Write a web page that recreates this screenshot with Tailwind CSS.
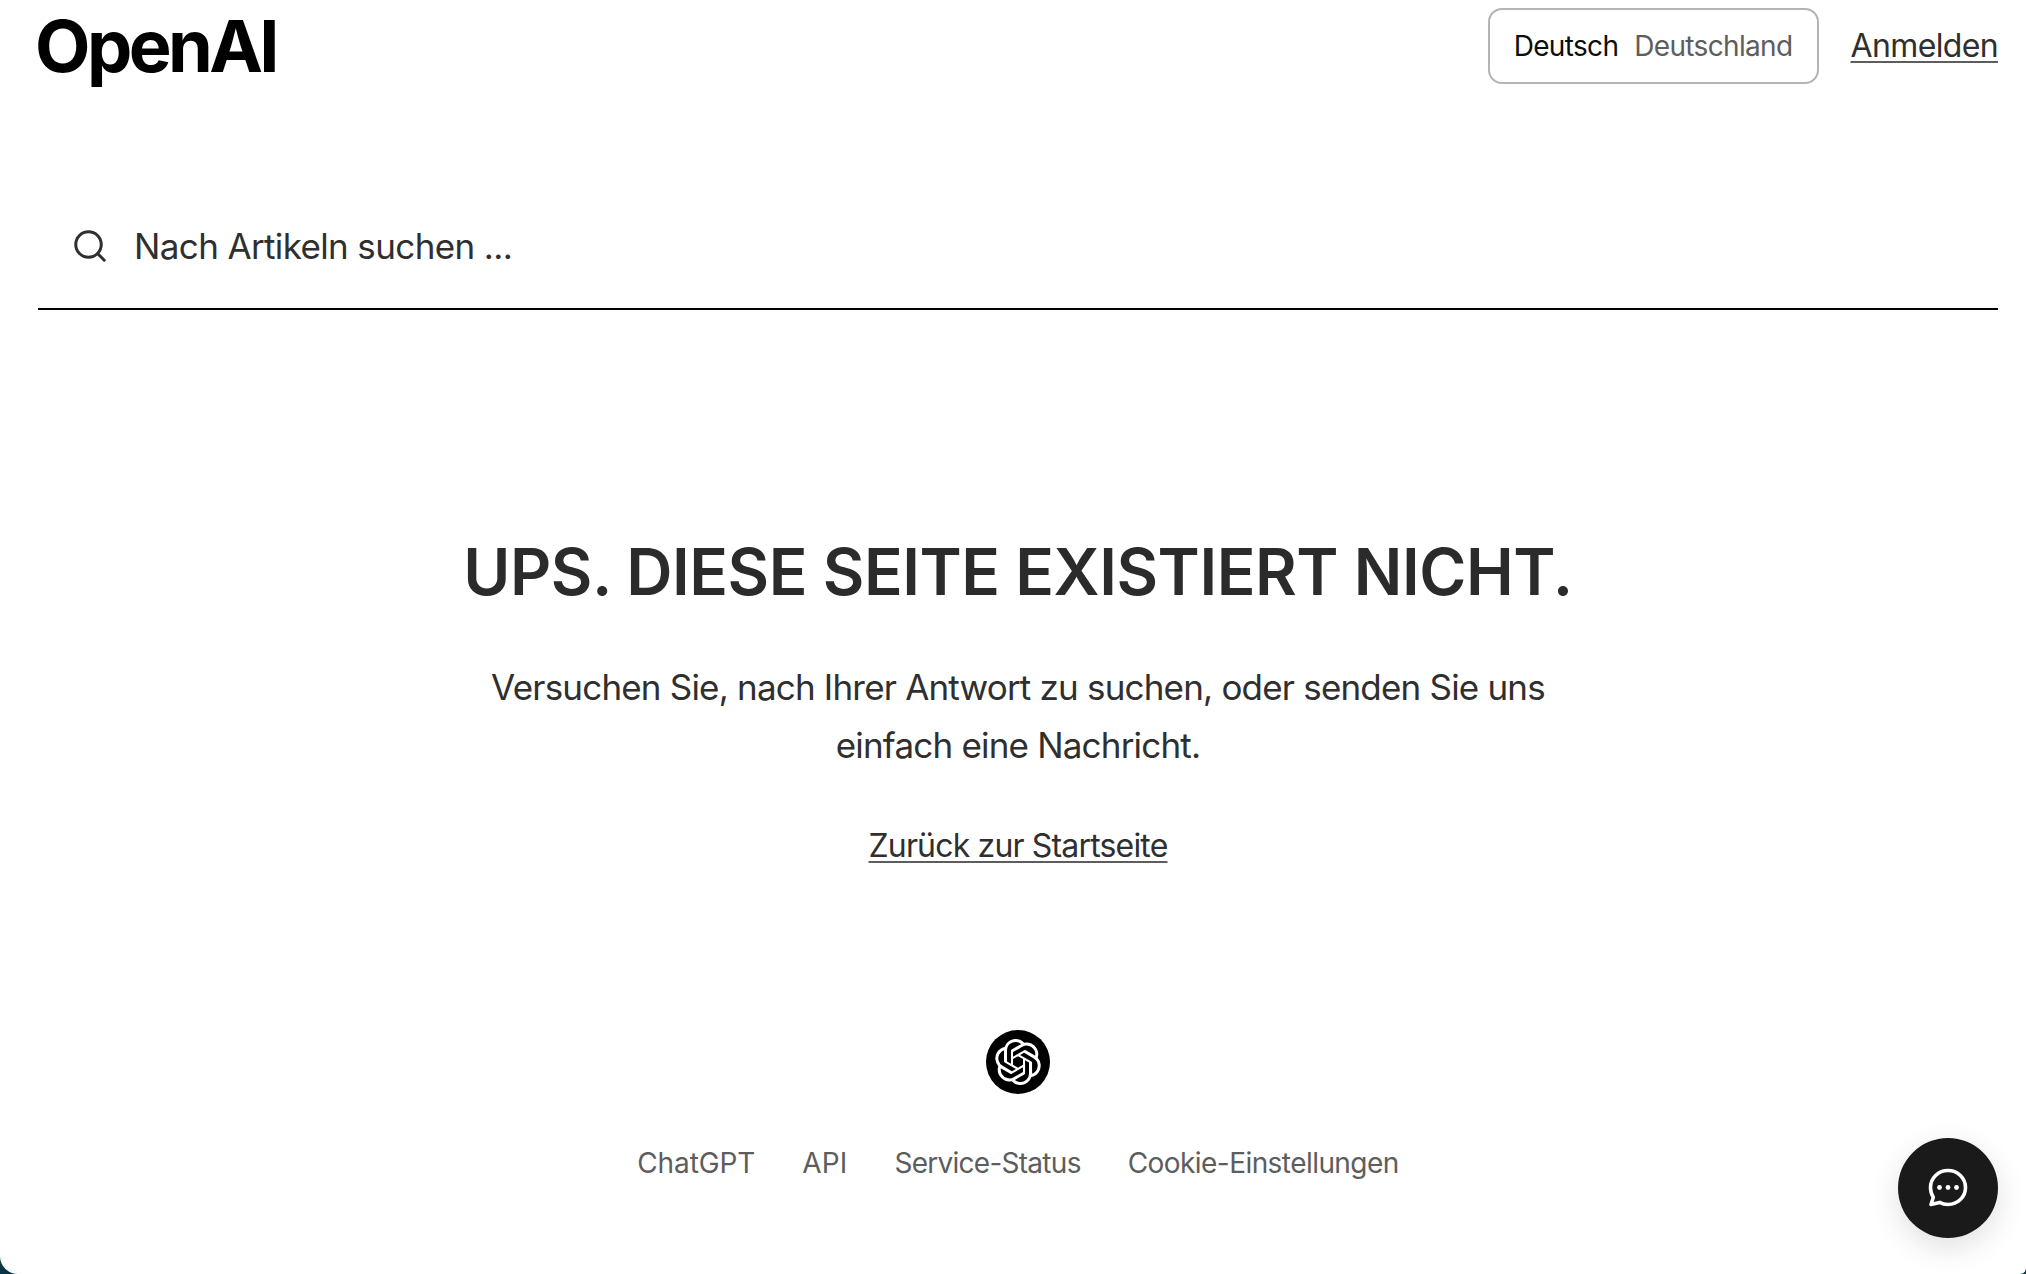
<!DOCTYPE html>
<html lang="de">
<head>
    <meta charset="UTF-8">
    <title>OpenAI Hilfe</title>
    <script src="https://cdn.jsdelivr.net/npm/@tailwindcss/browser@4"></script>
</head>
<body class="bg-[#0b3542] h-[1274px] overflow-hidden font-['Inter',sans-serif]">
    <div class="relative h-[1274px] bg-white rounded-bl-[18px] rounded-br-[6px] overflow-hidden">
        <header class="flex items-center justify-between pl-[38px] pr-[28px] h-[92px]">
            <a href="#" class="text-[72px] font-bold tracking-[-0.05em] leading-none text-black -ml-[3px]">OpenAI</a>
            <div class="flex items-center gap-[32px]">
                <button class="flex items-center justify-center gap-[16px] w-[331px] h-[76px] -mt-[1px] border-2 border-[#b4b4b4] rounded-[14px] text-[28px] tracking-[-0.024em]">
                    <span class="text-[#0d0d0d]">Deutsch</span>
                    <span class="text-[#5d5d5d]">Deutschland</span>
                </button>
                <a href="#" class="text-[32px] tracking-[-0.02em] text-[#2f2f2f] underline underline-offset-[4px] decoration-2 decoration-[#5d5d5d]">Anmelden</a>
            </div>
        </header>

        <div class="ml-[38px] mr-[28px] mt-[116px] h-[102px] border-b-2 border-black flex items-start pl-[34px] gap-[26px]">
            <svg class="w-[36px] h-[36px] mt-[20px] shrink-0" viewBox="0 0 24 24" fill="none" stroke="#2f2f2f" stroke-width="2" stroke-linecap="round">
                <circle cx="11" cy="11" r="8.5"/>
                <path d="M17.2 17.2 21.5 21.5"/>
            </svg>
            <span class="text-[35px] leading-[60px] mt-[8px] tracking-[-0.018em] text-[#2f2f2f]">Nach Artikeln suchen ...</span>
        </div>

        <main class="flex flex-col items-center text-center ml-[38px] mr-[28px] mt-[226px]">
            <h1 class="text-[64px] leading-[72px] font-semibold tracking-[-0.007em] text-[#2b2b2b] uppercase">Ups. Diese Seite existiert nicht.</h1>
            <p class="mt-[50px] text-[35px] leading-[58px] tracking-[-0.023em] text-[#2f2f2f]">Versuchen Sie, nach Ihrer Antwort zu suchen, oder senden Sie uns<br>einfach eine Nachricht.</p>
            <a href="#" class="mt-[52px] text-[32px] leading-[40px] tracking-[-0.026em] text-[#2f2f2f] underline underline-offset-[4px] decoration-2 decoration-[#5d5d5d]">Zurück zur Startseite</a>
        </main>

        <footer class="flex flex-col items-center ml-[38px] mr-[28px] mt-[164px]">
            <div class="w-[64px] h-[64px] rounded-full bg-black flex items-center justify-center">
                <svg class="w-[46px] h-[46px]" viewBox="0 0 24 24" fill="#fff">
                    <path d="M22.2819 9.8211a5.9847 5.9847 0 0 0-.5157-4.9108 6.0462 6.0462 0 0 0-6.5098-2.9A6.0651 6.0651 0 0 0 4.9807 4.1818a5.9847 5.9847 0 0 0-3.9977 2.9 6.0462 6.0462 0 0 0 .7427 7.0966 5.98 5.98 0 0 0 .511 4.9107 6.051 6.051 0 0 0 6.5146 2.9001A5.9847 5.9847 0 0 0 13.2599 24a6.0557 6.0557 0 0 0 5.7718-4.2058 5.9894 5.9894 0 0 0 3.9977-2.9001 6.0557 6.0557 0 0 0-.7475-7.0729zm-9.022 12.6081a4.4755 4.4755 0 0 1-2.8764-1.0408l.1419-.0804 4.7783-2.7582a.7948.7948 0 0 0 .3927-.6813v-6.7369l2.02 1.1686a.071.071 0 0 1 .038.052v5.5826a4.504 4.504 0 0 1-4.4945 4.4944zm-9.6607-4.1254a4.4708 4.4708 0 0 1-.5346-3.0137l.142.0852 4.783 2.7582a.7712.7712 0 0 0 .7806 0l5.8428-3.3685v2.3324a.0804.0804 0 0 1-.0332.0615L9.74 19.9502a4.4992 4.4992 0 0 1-6.1408-1.6464zM2.3408 7.8956a4.485 4.485 0 0 1 2.3655-1.9728V11.6a.7664.7664 0 0 0 .3879.6765l5.8144 3.3543-2.0201 1.1685a.0757.0757 0 0 1-.071 0l-4.8303-2.7865A4.504 4.504 0 0 1 2.3408 7.872zm16.5963 3.8558L13.1038 8.364 15.1192 7.2a.0757.0757 0 0 1 .071 0l4.8303 2.7913a4.4944 4.4944 0 0 1-.6765 8.1042v-5.6772a.79.79 0 0 0-.407-.667zm2.0107-3.0231l-.142-.0852-4.7735-2.7818a.7759.7759 0 0 0-.7854 0L9.409 9.2297V6.8974a.0662.0662 0 0 1 .0284-.0615l4.8303-2.7866a4.4992 4.4992 0 0 1 6.6802 4.66zM8.3065 12.863l-2.02-1.1638a.0804.0804 0 0 1-.038-.0567V6.0742a4.4992 4.4992 0 0 1 7.3757-3.4537l-.142.0805L8.704 5.459a.7948.7948 0 0 0-.3927.6813zm1.0976-2.3654l2.602-1.4998 2.6069 1.4998v2.9994l-2.5974 1.4997-2.6067-1.4997Z"/>
                </svg>
            </div>
            <nav class="mt-[51px] flex items-center gap-[47px] text-[28px] leading-[36px] text-[#5d5d5d]">
                <a href="#" class="tracking-[-0.004em]">ChatGPT</a>
                <a href="#" class="tracking-[0.005em]">API</a>
                <a href="#" class="tracking-[-0.026em]">Service-Status</a>
                <a href="#" class="tracking-[-0.02em]">Cookie-Einstellungen</a>
            </nav>
        </footer>

        <button class="absolute right-[28px] bottom-[36px] w-[100px] h-[100px] rounded-full bg-[#1a1a1a] flex items-center justify-center shadow-[0_10px_30px_rgba(0,0,0,0.12)]">
            <svg class="w-[44px] h-[44px]" viewBox="0 0 44 44" fill="none">
                <path d="M22 4.5C31.7 4.5 39.5 12 39.5 21.5S31.7 38.5 22 38.5C18.8 38.5 16 37.7 13.6 36.4L5 38.5 7.3 31.2C5.5 28.5 4.5 25.2 4.5 21.5 4.5 12 12.3 4.5 22 4.5Z" stroke="#fff" stroke-width="3.6" stroke-linejoin="round"/>
                <circle cx="13.5" cy="21.5" r="2.4" fill="#fff"/>
                <circle cx="22" cy="21.5" r="2.4" fill="#fff"/>
                <circle cx="30.5" cy="21.5" r="2.4" fill="#fff"/>
            </svg>
        </button>
    </div>
</body>
</html>
